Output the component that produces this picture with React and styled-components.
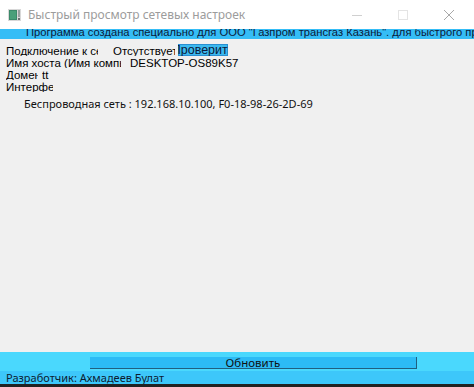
import React from "react";
import styled, { createGlobalStyle } from "styled-components";

const GlobalStyle = createGlobalStyle`
  html, body {
    margin: 0;
    padding: 0;
    background: #f0f0f0;
  }
`;

const Window = styled.div`
  width: 474px;
  height: 387px;
  display: flex;
  flex-direction: column;
  overflow: hidden;
  font-family: "Liberation Sans", Arial, sans-serif;
  font-size: 11.5px;
  color: #000;
  background: #f0f0f0;
`;

const TitleBar = styled.div`
  height: 29px;
  flex: none;
  background: #fff;
  display: flex;
  align-items: center;
  padding-left: 8px;
`;

const Title = styled.div`
  flex: 1;
  margin-left: 7px;
  font-family: "Noto Sans", "Open Sans", sans-serif;
  font-size: 12px;
  color: #9c9c9c;
  white-space: nowrap;
`;

const Controls = styled.div`
  display: flex;
  height: 100%;
  padding-right: 2px;
`;

const Ctrl = styled.div`
  width: 46px;
  display: flex;
  align-items: center;
  justify-content: center;
`;

const Banner = styled.div`
  height: 10px;
  flex: none;
  background: #35bdf6;
  display: flex;
  align-items: flex-end;
  padding-left: 26px;
  overflow: hidden;
  white-space: nowrap;
  line-height: 13px;
  font-size: 11.2px;
  color: #0a1a3a;
`;

const Body = styled.div`
  flex: 1;
  padding: 7px 0 0 6px;
  display: flex;
  flex-direction: column;
`;

const Row = styled.div`
  display: flex;
  height: 12px;
  align-items: flex-start;
`;

const Cell = styled.div`
  width: ${(p) => p.$w}px;
  flex: none;
  height: 10px;
  line-height: 11px;
  overflow: hidden;
  white-space: nowrap;
  margin-left: ${(p) => p.$ml || 0}px;
`;

const CheckLink = styled.div`
  width: 50px;
  height: 12px;
  margin-left: 3px;
  margin-top: -2px;
  background: #3bb9ef;
  overflow: hidden;
  display: flex;
  justify-content: center;
  line-height: 13px;
  font-size: 12.5px;
  white-space: nowrap;
  color: #0a1a3a;
  box-shadow: inset 0 0 0 1px #2a8fd0;
`;

const Interface = styled.div`
  margin-top: 3px;
  padding-left: 18px;
  line-height: 13px;
  white-space: nowrap;
  font-family: "Noto Sans", "Open Sans", sans-serif;
  font-size: 11px;
  color: #111;
`;

const BottomPanel = styled.div`
  height: 19px;
  flex: none;
  background: #4ad8fd;
  display: flex;
  align-items: center;
  padding-left: 90px;
  padding-top: 3px;
  box-sizing: border-box;
`;

const RefreshButton = styled.button`
  width: 327px;
  height: 12px;
  padding: 0;
  border: none;
  border-right: 1px solid #1f5f80;
  border-bottom: 1px solid #1f5f80;
  background: #2cbbf5;
  font-family: "Noto Sans", "Open Sans", sans-serif;
  font-size: 11.5px;
  line-height: 11px;
  color: #111;
  box-sizing: border-box;
`;

const Footer = styled.div`
  height: 13px;
  flex: none;
  background: #3dc7fa;
  padding-left: 6px;
  overflow: hidden;
  white-space: nowrap;
  line-height: 14px;
  font-family: "Noto Sans", "Open Sans", sans-serif;
  font-size: 11px;
  color: #0c1c30;
`;

const BottomEdge = styled.div`
  height: 3px;
  flex: none;
  background: #222;
`;

const AppIcon = () => (
  <svg width="13" height="12" viewBox="0 0 13 12">
    <rect x="0" y="0" width="13" height="12" fill="#d8d8d8" />
    <rect x="1" y="1" width="8" height="10" fill="#3c8a6a" />
    <rect x="2" y="2" width="6" height="8" fill="#4aa07a" />
    <rect x="10" y="1" width="2" height="7" fill="#9aa0a0" />
    <rect x="10" y="9" width="2" height="2" fill="#6a7070" />
  </svg>
);

const App = () => (
  <>
    <GlobalStyle />
    <Window>
      <TitleBar>
        <AppIcon />
        <Title>Быстрый просмотр сетевых настроек</Title>
        <Controls>
          <Ctrl>
            <svg width="10" height="10" viewBox="0 0 10 10">
              <line x1="0" y1="5.5" x2="10" y2="5.5" stroke="#d0d0d0" />
            </svg>
          </Ctrl>
          <Ctrl>
            <svg width="10" height="10" viewBox="0 0 10 10">
              <rect x="0.5" y="0.5" width="9" height="9" fill="none" stroke="#e4e4e4" />
            </svg>
          </Ctrl>
          <Ctrl>
            <svg width="10" height="10" viewBox="0 0 10 10">
              <path d="M0 0 L10 10 M10 0 L0 10" stroke="#a8a8a8" />
            </svg>
          </Ctrl>
        </Controls>
      </TitleBar>
      <Banner>
        Программа создана специально для ООО "Газпром трансгаз Казань". для быстрого просмотра сетевых настроек
      </Banner>
      <Body>
        <Row>
          <Cell $w={92}>Подключение к сети:</Cell>
          <Cell $w={62} $ml={15}>Отсутствует</Cell>
          <CheckLink>Проверить</CheckLink>
        </Row>
        <Row>
          <Cell $w={115}>Имя хоста (Имя компьютера):</Cell>
          <Cell $w={120} $ml={9}>DESKTOP-OS89K57</Cell>
        </Row>
        <Row>
          <Cell $w={32}>Домен:</Cell>
          <Cell $w={20} $ml={4}>tt</Cell>
        </Row>
        <Row>
          <Cell $w={47}>Интерфейсы:</Cell>
        </Row>
        <Interface>Беспроводная сеть : 192.168.10.100, F0-18-98-26-2D-69</Interface>
      </Body>
      <BottomPanel>
        <RefreshButton>Обновить</RefreshButton>
      </BottomPanel>
      <Footer>Разработчик: Ахмадеев Булат</Footer>
      <BottomEdge />
    </Window>
  </>
);

export default App;
